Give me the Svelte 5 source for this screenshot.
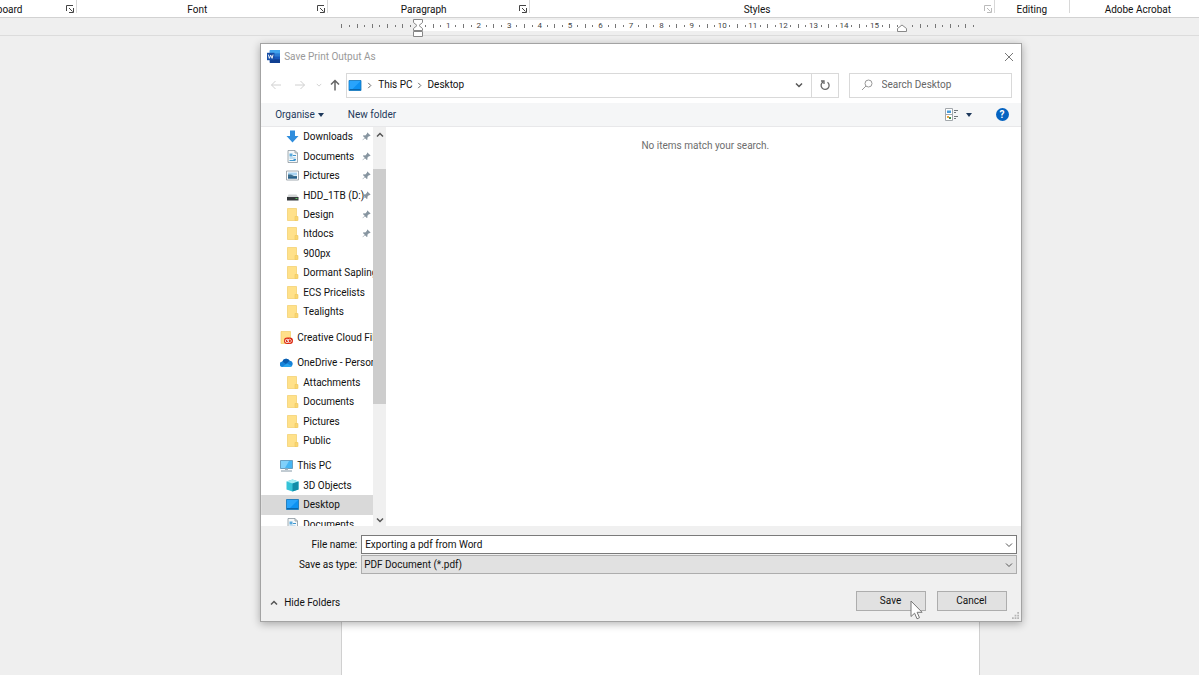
<script lang="ts">
    const ribbonGroups = [
        { name: 'Clipboard', size: 'clipboard', launcher: true },
        { name: 'Font', size: 'font', launcher: true },
        { name: 'Paragraph', size: 'paragraph', launcher: true },
        { name: 'Styles', size: 'styles', launcher: true, disabled: true },
        { name: 'Editing', size: 'editing', launcher: false },
        { name: 'Adobe Acrobat', size: 'acrobat', launcher: false }
    ];

    // four ticks to the centimetre, the margin starts at tick 0
    const ticks = Array.from({ length: 84 }, (_, i) => i - 10);

    function tickKind(tick: number) {
        if (tick === 0 || tick === 64) return 'blank';
        if (tick > 0 && tick < 64 && tick % 4 === 0) return 'number';
        return tick % 2 === 0 ? 'long' : 'short';
    }

    const places = [
        { name: 'Downloads', icon: 'download', pinned: true },
        { name: 'Documents', icon: 'document', pinned: true },
        { name: 'Pictures', icon: 'picture', pinned: true },
        { name: 'HDD_1TB (D:)', icon: 'drive', pinned: true },
        { name: 'Design', icon: 'folder', pinned: true },
        { name: 'htdocs', icon: 'folder', pinned: true },
        { name: '900px', icon: 'folder' },
        { name: 'Dormant Saplings', icon: 'folder' },
        { name: 'ECS Pricelists', icon: 'folder' },
        { name: 'Tealights', icon: 'folder' },
        { name: 'Creative Cloud Files', icon: 'creative', root: true },
        { name: 'OneDrive - Personal', icon: 'cloud', root: true },
        { name: 'Attachments', icon: 'folder' },
        { name: 'Documents', icon: 'folder' },
        { name: 'Pictures', icon: 'folder' },
        { name: 'Public', icon: 'folder' },
        { name: 'This PC', icon: 'pc', root: true },
        { name: '3D Objects', icon: 'cube' },
        { name: 'Desktop', icon: 'desktop' },
        { name: 'Documents', icon: 'document' }
    ];

    let selected = $state(18);
    let fileName = $state('Exporting a pdf from Word');
    let search = $state('');
</script>

{#snippet placeIcon(kind)}
    <svg class="place-icon" viewBox="0 0 13 13" aria-hidden="true">
        {#if kind === 'download'}
            <path d="M4 0.5h5v5.5h3.5L6.5 12.5 0.5 6H4z" fill="#2f8ddd" />
        {:else if kind === 'document'}
            <path d="M2 .5h7l2.5 2.5v9.500H2z" fill="#f6f8f9" stroke="#8b979e" stroke-width=".8" />
            <path d="M9 .5V3h2.500" fill="none" stroke="#8b979e" stroke-width=".8" />
            <path d="M3.500 3.500h3v3h-3z" fill="#5aa9dc" />
            <path d="M7 5.500h3M7.500 9.500h2.500M3.500 10.500h6" stroke="#3f97d0" />
            <path d="M3.500 8h6" stroke="#8fc3e4" />
        {:else if kind === 'picture'}
            <path d="M.5 2h12v9H.5z" fill="#fff" stroke="#8d979e" stroke-width=".8" />
            <path d="M2 3.500h9v3H2z" fill="#a9d4f2" />
            <path d="M2 5.500l3 0 3 1.500 3 0v2.500H2z" fill="#3f6e8c" />
            <path d="M2 8h9v1.500H2z" fill="#26618d" />
        {:else if kind === 'drive'}
            <path d="M2.500 5.500h8l2 3H1z" fill="#d3d5d6" />
            <path d="M1 8h11.500v3.500H1z" fill="#33373a" />
            <path d="M9.500 9.500h2" stroke="#58c25b" />
        {:else if kind === 'folder'}
            <path d="M1.500.5h9v12h-9z" fill="#ffe18a" stroke="#f0c85a" stroke-width=".6" />
            <path d="M9 8.500h3v4H9z" fill="#f9d672" stroke="#f0c85a" stroke-width=".6" />
        {:else if kind === 'creative'}
            <path d="M1 .5h9.500v12H1z" fill="#ffe08a" stroke="#f0c85a" stroke-width=".6" />
            <rect x="4" y="6.500" width="9" height="6.500" rx="3.200" fill="#dc2a12" />
            <circle cx="7" cy="9.900" r="1.700" fill="none" stroke="#fff" stroke-width=".8" />
            <path d="M7 9.900l1.800-1.500a1.700 1.700 0 1 1 0 3l-1-.9" fill="none" stroke="#fff" stroke-width=".8" />
        {:else if kind === 'cloud'}
            <path d="M2.800 11a2.800 2.800 0 0 1-.4-5.600A4 4 0 0 1 9.600 4.700 3.200 3.200 0 0 1 10.300 11z" fill="#1682d8" />
            <path d="M2.400 5.400A4 4 0 0 1 9.600 4.700L6 8z" fill="#0a5cad" />
            <path d="M2 11l5-3.500L12 10q-.6 1-1.700 1z" fill="#2aa5ee" />
        {:else if kind === 'pc'}
            <path d="M.5 1.500h12v8H.5z" fill="#46b5f3" stroke="#5b8fb2" stroke-width=".8" />
            <path d="M1 2h8l-4 7H1z" fill="#80d0fa" />
            <path d="M5 9.500h3v1.500H5z" fill="#9db2c0" />
            <path d="M1 12h11" stroke="#8498a6" />
        {:else if kind === 'cube'}
            <path d="M6.500.5l6 2v8l-6 2-6-2v-8z" fill="#35c3d8" />
            <path d="M6.500.5l6 2-6 2-6-2z" fill="#a5edf3" />
            <path d="M6.500 4.500l6-2v8l-6 2z" fill="#118da8" />
        {:else if kind === 'desktop'}
            <path d="M.5 1.500h12v10H.5z" fill="#0d91f2" stroke="#1173b8" stroke-width=".8" />
            <path d="M1 2h11L3 11H1z" fill="#29a4fb" />
            <path d="M1 10.500h11" stroke="#0a66ab" />
        {/if}
    </svg>
{/snippet}

{#snippet chevron(direction)}
    <svg class="chevron {direction}" viewBox="0 0 8 8" aria-hidden="true">
        <path d="M1 2.500l3 3 3-3" />
    </svg>
{/snippet}

<div class="word">
    <header class="ribbon">
        {#each ribbonGroups as group}
            <div class="group {group.size}">
                <span>{group.name}</span>
                {#if group.launcher}
                    <button class="launcher" aria-label="{group.name} settings" disabled={group.disabled}>
                        <svg viewBox="0 0 8 8" aria-hidden="true">
                            <path d="M.5 6V.5H7M3 3l3.500 3.500M7.500 3v4.500H3" />
                        </svg>
                    </button>
                {/if}
            </div>
        {/each}
    </header>

    <div class="ruler-bar">
        <div class="ruler">
            {#each ticks as tick}
                <span class="tick {tickKind(tick)}">{tickKind(tick) === 'number' ? tick / 4 : ''}</span>
            {/each}
            <svg class="marker indent" viewBox="0 0 11 18" aria-hidden="true">
                <path d="M1 .5h9v3L6.500 6.500 10 9.500v2H1v-2l3.500-3L1 3.500zM1 12.500h9v5H1z" />
            </svg>
            <svg class="marker end" viewBox="0 0 11 10" aria-hidden="true">
                <path d="M1 8.500v-3l4.500-3.500 4.500 3.500v3z" />
            </svg>
        </div>
    </div>

    <main class="canvas">
        <div class="page"></div>
    </main>

    <div class="dialog" role="dialog" aria-labelledby="dialog-title">
        <div class="title-bar">
            <svg class="word-icon" viewBox="0 0 14 14" aria-hidden="true">
                <rect x="3" y="0" width="11" height="14" rx="1" fill="#185abd" />
                <path d="M3 0h11v4H3z" fill="#41a5ee" />
                <path d="M3 4h11v3H3z" fill="#2b7cd3" />
                <path d="M3 10h11v4H3z" fill="#103f91" />
                <rect x="0" y="3" width="8" height="8" fill="#174ea6" />
                <path d="M1.500 5l1 4L4 5.500 5.500 9l1-4" fill="none" stroke="#fff" />
            </svg>
            <h1 id="dialog-title">Save Print Output As</h1>
            <button class="close" aria-label="Close">
                <svg viewBox="0 0 10 10" aria-hidden="true"><path d="M1 1l8 8M9 1L1 9" /></svg>
            </button>
        </div>

        <div class="nav-row">
            <button class="nav faint" aria-label="Back">
                <svg viewBox="0 0 12 12" aria-hidden="true"><path d="M11 6H1.500M5.500 2l-4 4 4 4" /></svg>
            </button>
            <button class="nav faint" aria-label="Forward">
                <svg viewBox="0 0 12 12" aria-hidden="true"><path d="M1 6h9.500M6.500 2l4 4-4 4" /></svg>
            </button>
            <button class="recent" aria-label="Recent locations">{@render chevron('small')}</button>
            <button class="nav up" aria-label="Up">
                <svg viewBox="0 0 12 12" aria-hidden="true"><path d="M6 11.500V1.500M2 5.500l4-4 4 4" /></svg>
            </button>
            <div class="address">
                {@render placeIcon('desktop')}
                {@render chevron('right')}
                <a href="#this-pc">This PC</a>
                {@render chevron('right')}
                <a href="#desktop">Desktop</a>
                <button class="history" aria-label="Previous locations">{@render chevron('bold')}</button>
                <button class="refresh" aria-label="Refresh">
                    <svg viewBox="0 0 12 12" aria-hidden="true">
                        <path d="M8.500 3.200A4 4 0 1 1 4 3M2 2h3v3" />
                    </svg>
                </button>
            </div>
            <label class="search">
                <svg viewBox="0 0 12 12" aria-hidden="true">
                    <circle cx="7.500" cy="4.500" r="3.500" />
                    <path d="M5 7l-4 4" />
                </svg>
                <input type="text" placeholder="Search Desktop" aria-label="Search Desktop" bind:value={search} />
            </label>
        </div>

        <div class="toolbar">
            <button class="organise">Organise <span class="caret"></span></button>
            <button>New folder</button>
            <button class="view" aria-label="Change your view">
                <svg viewBox="0 0 13 13" aria-hidden="true">
                    <path d="M.5.5h7v12h-7zM.5 6.500h7" fill="#fff" stroke="#a3a8ac" />
                    <path d="M2 2.500h4v2.500H2z" fill="#4a9ddb" />
                    <path d="M2 8h2v2H2z" fill="#e8a33d" />
                    <path d="M4 9h2v2H4z" fill="#3e8d4d" />
                    <path d="M9 2.500h4M9 4.500h2M9 8.500h4M9 10.500h2" stroke="#70767a" />
                </svg>
                <span class="caret"></span>
            </button>
            <button class="help" aria-label="Help">?</button>
        </div>

        <div class="browser">
            <nav class="places" aria-label="Folders">
                {#each places as place, i}
                    <button
                        class="place"
                        class:root={place.root}
                        class:selected={selected === i}
                        onclick={() => (selected = i)}
                    >
                        {@render placeIcon(place.icon)}
                        <span>{place.name}</span>
                        {#if place.pinned}
                            <svg class="pin" viewBox="0 0 10 10" aria-hidden="true">
                                <path d="M6 .5l3.500 3.500-.8.6-.8-.1L6 6.500l.1 1.700-.8.8-2-2L.8 9.200l-.3-.3L3 6.400 1 4.500l.8-.8 1.800.1L5.600 2l-.2-.8z" />
                            </svg>
                        {/if}
                    </button>
                {/each}
            </nav>
            <div class="scrollbar" aria-hidden="true">
                {@render chevron('up')}
                <div class="track"><div class="thumb"></div></div>
                {@render chevron('down')}
            </div>
            <p class="empty">No items match your search.</p>
        </div>

        <form class="save-panel" onsubmit={(e) => e.preventDefault()}>
            <div class="fields">
                <label for="file-name">File name:</label>
                <div class="combo">
                    <input id="file-name" type="text" bind:value={fileName} />
                    {@render chevron('drop')}
                </div>
                <label for="file-type">Save as type:</label>
                <div class="combo grey">
                    <select id="file-type">
                        <option>PDF Document (*.pdf)</option>
                    </select>
                    {@render chevron('drop')}
                </div>
            </div>
            <div class="actions">
                <button type="button" class="hide-folders">{@render chevron('up')} Hide Folders</button>
                <button type="submit" class="push">Save</button>
                <button type="button" class="push">Cancel</button>
            </div>
            <svg class="grip" viewBox="0 0 8 8" aria-hidden="true">
                <path d="M6 0h2v2H6zM3 3h2v2H3zM6 3h2v2H6zM0 6h2v2H0zM3 6h2v2H3zM6 6h2v2H6z" />
            </svg>
            <svg class="cursor" viewBox="0 0 13 20" aria-hidden="true">
                <path d="M1 1v15.500l3.600-3.300 2.400 5.600 2.500-1.100-2.400-5.400h5z" />
            </svg>
        </form>
    </div>
</div>

<style>
    :global(body) {
        background: #efefef;
    }

    .word {
        position: relative;
        display: flex;
        flex-direction: column;
        min-height: 100vh;
        overflow: hidden;
        font-family: Roboto, "Open Sans", sans-serif;
        font-size: 10px;
        line-height: 14px;
        color: #111;
    }

    button,
    input,
    select {
        margin: 0;
        padding: 0;
        border: 0;
        background: none;
        font: inherit;
        color: inherit;
    }

    svg {
        display: block;
        flex: none;
    }

    .ribbon {
        display: flex;
        height: 17px;
        margin: 0 -8px 0 -64px;
        background: #fff;
        border-bottom: 1px solid #d2d2d2;
    }

    .group {
        display: flex;
        align-items: center;
        box-sizing: border-box;
        height: 13px;
        min-width: 0;
        border-right: 1px solid #d8d8d8;
    }

    .group span {
        flex: 1;
        padding-top: 6px;
        text-align: center;
        white-space: nowrap;
    }

    .group.clipboard { flex: 141; }
    .group.font { flex: 251; }
    .group.paragraph { flex: 202; }
    .group.styles { flex: 466; }
    .group.editing { flex: 74; }
    .group.acrobat { flex: 137; }

    .launcher {
        padding: 5px 2px 0 0;
    }

    .launcher svg {
        width: 8px;
        height: 8px;
        fill: none;
        stroke: #444;
    }

    .launcher:disabled svg {
        stroke: #bbb;
    }

    .ruler-bar,
    .canvas {
        display: grid;
        grid-template-columns: 341fr 639fr 219fr;
    }

    .ruler-bar {
        height: 17px;
        border-bottom: 1px solid #dcdcdc;
    }

    .ruler {
        position: relative;
        grid-column: 2;
        display: flex;
        width: 100%;
        height: 11px;
        margin: 2px 0 0 -3px;
        background: linear-gradient(to right, transparent 12.5%, #fff 12.5%, #fff 88%, transparent 88%);
    }

    .tick {
        display: flex;
        flex: 1;
        align-items: center;
        justify-content: center;
        min-width: 0;
        font-size: 8px;
        line-height: 10px;
        color: #444;
    }

    .tick.long::before,
    .tick.short::before {
        content: '';
        width: 1px;
        height: 4px;
        background: #777;
    }

    .tick.short::before {
        height: 2px;
    }

    .marker {
        position: absolute;
        width: 11px;
        fill: #fff;
        stroke: #888;
        transform: translateX(-50%);
    }

    .marker.indent {
        top: -1px;
        left: 12.5%;
        height: 18px;
    }

    .marker.end {
        top: 3px;
        left: 88.3%;
        height: 10px;
    }

    .canvas {
        flex: 1;
    }

    .page {
        grid-column: 2;
        margin-top: 40px;
        background: #fff;
        border: 1px solid #d0d0d0;
        border-bottom: 0;
    }

    .dialog {
        position: absolute;
        top: 43px;
        left: 21.7%;
        right: 14.8%;
        background: #fff;
        border: 1px solid #a3a3a3;
        box-shadow: 0 2px 8px rgba(0, 0, 0, 0.3);
    }

    .title-bar {
        display: flex;
        align-items: center;
        height: 25px;
        padding: 0 7px 0 6px;
    }

    .word-icon {
        width: 13px;
        height: 13px;
        margin-right: 4px;
    }

    h1 {
        flex: 1;
        margin: 0;
        font-size: 10px;
        font-weight: 400;
        color: #999;
    }

    .close svg {
        width: 10px;
        height: 10px;
        stroke: #777;
    }

    .nav-row {
        display: flex;
        align-items: center;
        height: 34px;
        padding: 0 9px 2px;
        box-sizing: border-box;
    }

    .nav svg {
        width: 12px;
        height: 12px;
        fill: none;
        stroke: #666;
    }

    .nav.faint svg {
        stroke: #d0d0d0;
    }

    .nav + .nav {
        margin-left: 12px;
    }

    .recent {
        margin: 0 7px 0 10px;
    }

    .nav.up {
        margin-right: 5px;
    }

    .nav.up svg {
        stroke-width: 1.500;
    }

    .address,
    .search {
        display: flex;
        align-items: center;
        box-sizing: border-box;
        height: 25px;
        border: 1px solid #d9d9d9;
        background: #fff;
    }

    .address {
        flex: 1;
        min-width: 0;
        padding-left: 1px;
    }

    .address a {
        margin: 0 3px 0 5px;
        color: inherit;
        text-decoration: none;
    }

    .address .place-icon {
        width: 14px;
        height: 13px;
    }

    .history {
        margin-left: auto;
        padding: 0 8px;
    }

    .refresh {
        display: grid;
        place-items: center;
        align-self: stretch;
        width: 27px;
        border-left: 1px solid #d9d9d9;
    }

    .refresh svg {
        width: 12px;
        height: 12px;
        fill: none;
        stroke: #666;
        stroke-width: 1.300;
    }

    .search {
        width: 163px;
        margin-left: 10px;
        padding-left: 11px;
        gap: 9px;
    }

    .search svg {
        width: 12px;
        height: 12px;
        fill: none;
        stroke: #999;
    }

    .search input {
        flex: 1;
        min-width: 0;
        outline: 0;
    }

    .search input::placeholder {
        color: #666;
        opacity: 1;
    }

    .chevron {
        width: 8px;
        height: 8px;
        fill: none;
        stroke: #555;
    }

    .chevron.small {
        width: 6px;
        height: 6px;
        stroke: #c4c4c4;
    }

    .chevron.right {
        width: 7px;
        height: 7px;
        transform: rotate(-90deg);
    }

    .chevron.up {
        transform: rotate(180deg);
    }

    .chevron.bold,
    .chevron.up,
    .chevron.down {
        stroke-width: 1.500;
    }

    .toolbar {
        display: flex;
        align-items: center;
        height: 23px;
        padding: 0 12px 0 14px;
        background: #f5f6f7;
        border-bottom: 1px solid #e8e8ea;
        color: #1e395b;
    }

    .toolbar button {
        display: flex;
        align-items: center;
        gap: 4px;
    }

    .toolbar .organise {
        gap: 3px;
        margin-right: 24px;
    }

    .caret {
        border: 3px solid transparent;
        border-top: 4px solid #1e395b;
        border-bottom: 0;
    }

    .toolbar .view {
        gap: 8px;
        margin-left: auto;
        margin-right: 24px;
    }

    .view svg {
        width: 13px;
        height: 13px;
    }

    .toolbar .help {
        justify-content: center;
        width: 13px;
        height: 13px;
        border-radius: 50%;
        background: #0563c1;
        color: #fff;
        font-weight: 700;
    }

    .browser {
        display: flex;
        height: 399px;
    }

    .places {
        display: flex;
        flex-direction: column;
        flex: none;
        width: 112px;
        height: 407px;
        clip-path: inset(0 0 8px 0);
    }

    .place {
        display: flex;
        flex: 1;
        align-items: center;
        min-height: 0;
        padding-left: 25px;
        overflow: hidden;
        text-align: left;
        white-space: nowrap;
    }

    .place span {
        min-width: 0;
        padding-top: 1px;
    }

    .place.root {
        margin-top: 6px;
        padding-left: 19px;
    }

    .place.selected {
        background: #d9d9d9;
    }

    .place-icon {
        width: 13px;
        height: 13px;
        margin-right: 4px;
    }

    .pin {
        width: 9px;
        height: 9px;
        margin: 0 2px 0 auto;
        fill: #8795a0;
    }

    .scrollbar {
        display: flex;
        flex-direction: column;
        align-items: center;
        justify-content: space-between;
        flex: none;
        width: 13px;
        padding: 4px 0 2px;
        box-sizing: border-box;
        background: #f0f0f0;
    }

    .track {
        flex: 1;
        align-self: stretch;
        padding: 30px 0 0;
    }

    .thumb {
        height: 235px;
        background: #cdcdcd;
    }

    .empty {
        flex: 1;
        margin: 12px 0 0 4px;
        text-align: center;
        color: #6d6d6d;
    }

    .save-panel {
        position: relative;
        padding: 9px 4px 10px 9px;
        background: #f0f0f0;
    }

    .fields {
        display: grid;
        grid-template-columns: 87px 1fr;
        align-items: center;
        gap: 1px 4px;
        text-align: right;
    }

    .combo {
        display: flex;
        align-items: center;
        box-sizing: border-box;
        height: 19px;
        padding: 0 3px;
        border: 1px solid #7a7a7a;
        background: #fff;
    }

    .combo.grey {
        padding-left: 2px;
        border-color: #adadad;
        background: #e1e1e1;
    }

    .combo input,
    .combo select {
        flex: 1;
        min-width: 0;
        appearance: none;
        outline: 0;
    }

    .actions {
        display: flex;
        align-items: center;
        gap: 11px;
        margin-top: 17px;
        padding-right: 10px;
    }

    .hide-folders {
        display: flex;
        align-items: center;
        gap: 6px;
        margin-right: auto;
        padding-top: 4px;
    }

    .push {
        width: 70px;
        height: 20px;
        border: 1px solid #adadad;
        background: #e1e1e1;
    }

    .grip {
        position: absolute;
        right: 2px;
        bottom: 2px;
        width: 7px;
        height: 7px;
        fill: #b5b5b5;
    }

    .cursor {
        position: absolute;
        right: 98px;
        bottom: 1px;
        width: 13px;
        height: 20px;
        fill: #fff;
        stroke: #777;
        stroke-width: 1;
    }
</style>
